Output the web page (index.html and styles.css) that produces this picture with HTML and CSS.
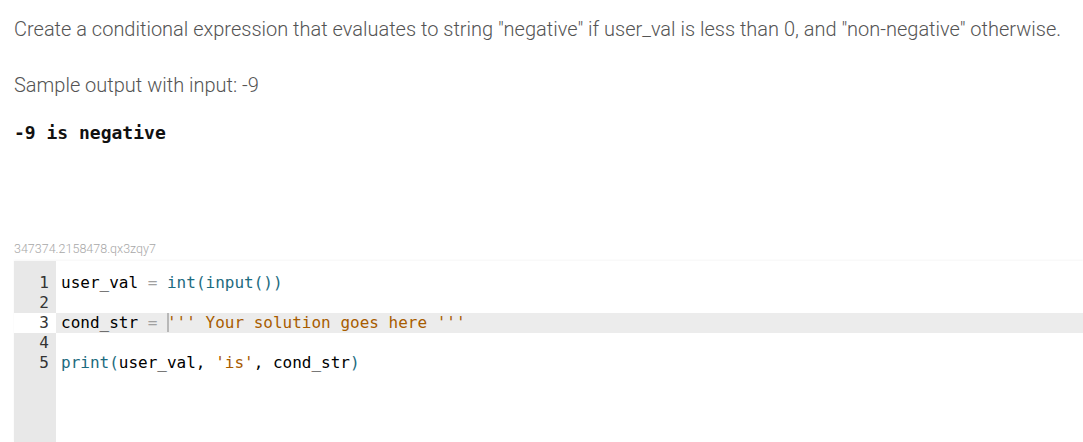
FILE: index.html
```html
<!DOCTYPE html>
<html>
<head>
<meta charset="utf-8">
<link rel="stylesheet" href="styles.css">
</head>
<body>
<div class="page">
  <p class="prompt">Create a conditional expression that evaluates to string "negative" if user_val is less than 0, and "non-negative" otherwise.</p>
  <p class="prompt sample">Sample output with input: -9</p>
  <pre class="output">-9 is negative</pre>
  <div class="file-id">347374.2158478.qx3zqy7</div>
  <div class="editor">
    <div class="line"><span class="num">1</span><span class="code"><span class="var">user_val</span> <span class="op">=</span> <span class="bi">int(input())</span></span></div>
    <div class="line"><span class="num">2</span><span class="code"></span></div>
    <div class="line active"><span class="num">3</span><span class="code"><span class="var">cond_str</span> <span class="op">=</span> <span class="cursor"></span><span class="str">''' Your solution goes here '''</span></span></div>
    <div class="line"><span class="num">4</span><span class="code"></span></div>
    <div class="line"><span class="num">5</span><span class="code"><span class="bi">print(</span><span class="var">user_val</span>, <span class="str">'is'</span>, <span class="var">cond_str</span><span class="bi">)</span></span></div>
    <div class="filler"><span class="num"></span><span class="code"></span></div>
  </div>
</div>
</body>
</html>
```
FILE: styles.css
```css
html, body {
  margin: 0;
  padding: 0;
  background: #ffffff;
}
.page {
  padding: 0 0 0 14px;
  height: 442px;
  overflow: hidden;
  display: flex;
  flex-direction: column;
}
.prompt {
  margin: 0;
  font-family: Roboto, "Liberation Sans", sans-serif;
  font-weight: 300;
  font-size: 20px;
  line-height: 24px;
  color: #545454;
  padding-top: 17px;
}
.sample {
  padding-top: 32px;
}
.output {
  margin: 0;
  padding-top: 24px;
  font-family: "DejaVu Sans Mono", "Liberation Mono", monospace;
  font-weight: bold;
  font-size: 18px;
  line-height: 24px;
  color: #111;
}
.file-id {
  margin-top: 97px;
  font-family: Roboto, "Liberation Sans", sans-serif;
  font-weight: 300;
  font-size: 12.5px;
  line-height: 14px;
  color: #a8a8a8;
}
.editor {
  margin-top: 5px;
  flex: 1;
  display: flex;
  flex-direction: column;
  box-shadow: 0 -1px 2px rgba(0,0,0,0.04);
  font-family: "DejaVu Sans Mono", "Liberation Mono", monospace;
  font-size: 16px;
}
.line, .filler {
  display: flex;
  height: 20px;
  line-height: 20px;
}
.line:first-child {
  height: 32px;
}
.line:first-child .num,
.line:first-child .code {
  padding-top: 12px;
}
.filler {
  flex: 1;
}
.num {
  width: 35px;
  padding-right: 7px;
  text-align: right;
  background: #e8e8e8;
  color: #333;
  flex: none;
  align-self: stretch;
}
.code {
  flex: 1;
  padding-left: 5px;
  white-space: pre;
  color: #000;
}
.active .num {
  background: #fff;
}
.active .code {
  background: #ececec;
}
.var { color: #000; }
.op { color: #a0a0a0; }
.bi { color: #1d6b80; }
.str { color: #a85c00; }
.cursor {
  display: inline-block;
  width: 2px;
  height: 19px;
  vertical-align: top;
  background: #b8b8b8;
  margin-right: -2px;
}
```
